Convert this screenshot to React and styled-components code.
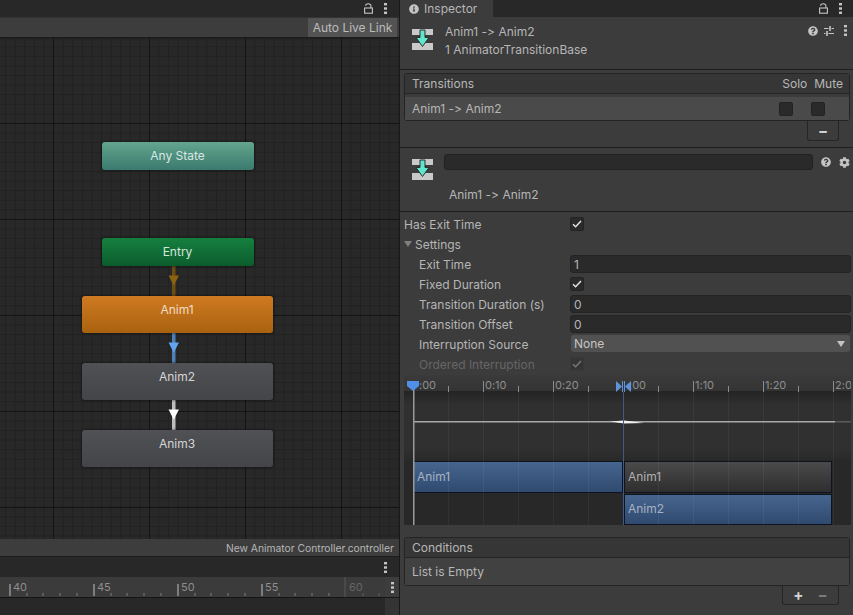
import React from "react";
import styled, { createGlobalStyle } from "styled-components";
import { FaCog, FaInfoCircle, FaQuestionCircle } from "react-icons/fa";

const GlobalStyle = createGlobalStyle`
  html, body {
    margin: 0;
    background: #191919;
  }
  body {
    font-family: Inter, "Noto Sans", "Liberation Sans", sans-serif;
    font-size: 12px;
    font-variant-ligatures: none;
    font-feature-settings: "calt" 0, "liga" 0;
    color: #b6b6b6;
  }
`;

const Page = styled.div`
  display: flex;
  width: 853px;
  height: 615px;
  overflow: hidden;
  background: #191919;
`;

/* ---------- icons ---------- */

const LockIcon = () => (
  <svg width="9" height="11" viewBox="0 0 9 11">
    <path d="M1.500 2.800C1.600 1.400 2.600 .7 4.200 .7S6.900 1.500 6.900 2.900V5" fill="none" stroke="#c4c4c4" strokeWidth="1.100" />
    <rect x=".6" y="5" width="7.800" height="5.200" fill="none" stroke="#c4c4c4" strokeWidth="1.100" />
  </svg>
);

const DotsIcon = () => (
  <svg width="3" height="11" viewBox="0 0 3 11">
    <rect y="0" width="3" height="2.400" fill="#c4c4c4" />
    <rect y="4.300" width="3" height="2.400" fill="#c4c4c4" />
    <rect y="8.600" width="3" height="2.400" fill="#c4c4c4" />
  </svg>
);

const SlidersIcon = () => (
  <svg width="10" height="10" viewBox="0 0 10 10">
    <path d="M0 2.500h4.500M7.500 2.500H10M0 7.500h1.500M4.500 7.500H10" stroke="#c4c4c4" strokeWidth="1.200" />
    <path d="M6 0v5M3 5v5" stroke="#c4c4c4" strokeWidth="1.600" />
  </svg>
);

const TransitionIcon = () => (
  <svg width="21" height="21" viewBox="0 0 21 21">
    <rect x="0" y="0" width="21" height="6" fill="#c9c9c9" />
    <rect x="0" y="14" width="21" height="7" fill="#c9c9c9" />
    <path d="M8 1h5v7.500h4l-6.500 9-6.500-9h4z" fill="#5fe6cd" stroke="#2f2f2f" strokeWidth="1" />
  </svg>
);

const CheckMark = () => (
  <svg width="10" height="8" viewBox="0 0 10 8">
    <path d="M1 4.200l2.600 2.500L9 1" fill="none" stroke="currentColor" strokeWidth="1.500" />
  </svg>
);

const TriangleDown = ({ size = 8, color = "#7f7f7f" }) => (
  <svg width={size} height={size - 2} viewBox="0 0 8 6">
    <path d="M0 0h8L4 6z" fill={color} />
  </svg>
);

/* ---------- shared bars ---------- */

const TabBar = styled.div`
  display: flex;
  align-items: center;
  justify-content: flex-end;
  flex: none;
  height: 17px;
  background: #282828;
`;

const TabIcons = styled.div`
  display: flex;
  align-items: center;
  gap: 11px;
  padding-right: ${(p) => p.$right}px;
`;

/* ---------- left pane ---------- */

const LeftPane = styled.div`
  display: flex;
  flex-direction: column;
  flex: none;
  width: 399px;
`;

const Toolbar = styled.div`
  display: flex;
  justify-content: flex-end;
  flex: none;
  height: 20px;
  padding-right: 2px;
  background: #3d3d3d;
  border-top: 1px solid #333;
  box-sizing: border-box;
`;

const LiveLink = styled.div`
  display: flex;
  align-items: center;
  justify-content: center;
  width: 89px;
  background: #535353;
  color: #bcbcbc;
  font-size: 12px;
`;

const Graph = styled.div`
  position: relative;
  flex: 1;
  background-color: #282828;
  background-image:
    linear-gradient(#141414 1px, transparent 1px),
    linear-gradient(90deg, #141414 1px, transparent 1px),
    linear-gradient(#212121 1px, transparent 1px),
    linear-gradient(90deg, #212121 1px, transparent 1px);
  background-size: 96px 96px, 96px 96px, 9.6px 9.6px, 9.6px 9.6px;
  background-position: 53px 86px, 53px 86px, 53px 86px, 53px 86px;

  &::before {
    content: "";
    position: absolute;
    inset: 0 0 auto 0;
    height: 3px;
    background: linear-gradient(#191919, transparent);
  }
`;

const NODE_COLORS = {
  any: ["#63a58d", "#3a7a6f", "#d8e6e1"],
  entry: ["#15803f", "#0c5c2c", "#d5e6da"],
  active: ["#cf7a22", "#a9620f", "#f2ddc4"],
  plain: ["#4f5154", "#434548", "#d6d6d6"],
};

const Node = styled.div`
  position: absolute;
  left: ${(p) => p.$x}px;
  top: ${(p) => p.$y}px;
  width: ${(p) => p.$w}px;
  height: ${(p) => p.$h}px;
  box-sizing: border-box;
  padding: ${(p) => p.$pad}px 1px 0 0;
  border-radius: 3px;
  text-align: center;
  line-height: 15px;
  color: ${(p) => NODE_COLORS[p.$kind][2]};
  background: linear-gradient(${(p) => NODE_COLORS[p.$kind][0]}, ${(p) => NODE_COLORS[p.$kind][1]});
  box-shadow: 0 0 3px rgba(0, 0, 0, 0.7);
`;

const Arrow = styled.svg`
  position: absolute;
  left: 167px;
  top: ${(p) => p.$y}px;
`;

const Connector = ({ y, color, line }) => (
  <Arrow $y={y} width="13" height="30" viewBox="0 0 13 30">
    <rect x="5" y="0" width="3.500" height="30" fill={line} />
    <path d="M1.500 9.500h10.500L6.750 19.500z" fill={color} />
  </Arrow>
);

const StatusBar = styled.div`
  display: flex;
  align-items: center;
  justify-content: flex-end;
  flex: none;
  height: 18px;
  padding-right: 5px;
  background: #3d3d3d;
  border-bottom: 1px solid #1c1c1c;
  box-sizing: border-box;
  font-size: 10.300px;
`;

const DarkBar = styled.div`
  display: flex;
  align-items: center;
  justify-content: flex-end;
  flex: none;
  height: 20px;
  padding-right: 12px;
  background: #282828;
`;

const RulerRow = styled.div`
  display: flex;
  flex: none;
  height: 20px;
  border-bottom: 1px solid #161616;
`;

const RulerTrack = styled.svg`
  display: block;
  flex: 1;
  background: #3b3b3b;
`;

const RulerEnd = styled.div`
  display: flex;
  align-items: center;
  justify-content: center;
  flex: none;
  width: 14px;
  background: #3d3d3d;
`;

const BottomRow = styled.div`
  display: flex;
  justify-content: flex-end;
  flex: none;
  height: 17px;
  background: #282828;
`;

const ScrollStub = styled.div`
  width: 14px;
  background: #343434;
`;

const BottomRuler = () => {
  const labels = [40, 45, 50, 55, 60];
  return (
    <RulerTrack height="20">
      {labels.map((n, i) => {
        const x = 9.5 + i * 84;
        const dim = n === 60;
        return (
          <g key={n}>
            {!dim && <rect x={x} y="7" width="1" height="12" fill="#c0c0c0" />}
            {dim && <rect x={x - 1} y="0" width="1" height="20" fill="#5a5a5a" />}
            <text x={x + 3.5} y="14" fontSize="11" fill={dim ? "#666" : "#8e8e8e"}>
              {n}
            </text>
            {[17, 33, 50, 67].map((d) => (
              <rect key={d} x={x + d} y="16" width="1" height="3" fill={dim ? "#606060" : "#7f7f7f"} />
            ))}
          </g>
        );
      })}
    </RulerTrack>
  );
};

/* ---------- right pane ---------- */

const RightPane = styled.div`
  display: flex;
  flex-direction: column;
  flex: 1;
  min-width: 0;
  margin-left: 1px;
  background: #3c3c3c;
`;

const InspectorTabs = styled.div`
  display: flex;
  flex: none;
  height: 17px;
  background: #282828;
`;

const ActiveTab = styled.div`
  display: flex;
  align-items: center;
  gap: 5px;
  width: 93px;
  padding-left: 9px;
  box-sizing: border-box;
  background: #3c3c3c;
`;

const TabFill = styled.div`
  display: flex;
  align-items: center;
  justify-content: flex-end;
  flex: 1;
`;

const AssetHeader = styled.div`
  display: flex;
  flex: none;
  height: 53px;
  box-sizing: border-box;
  padding: 12px 0 0 12px;
  border-bottom: 1px solid #1e1e1e;
`;

const AssetTitles = styled.div`
  flex: 1;
  margin: -6px 0 0 12px;
  line-height: 18px;
`;

const HeaderTools = styled.div`
  display: flex;
  align-items: center;
  gap: 6px;
  height: 11px;
  margin: -4px 6px 0 0;
`;

const ToolEnd = styled.span`
  display: inline-flex;
  margin-left: 4px;
`;

const ListSection = styled.div`
  flex: none;
  height: 78px;
  box-sizing: border-box;
  padding: 3px 3px 0 4px;
  border-bottom: 1px solid #1e1e1e;
`;

const ListBox = styled.div`
  border: 1px solid #242424;
  border-radius: 3px;
  background: #3c3c3c;
`;

const ListHead = styled.div`
  display: flex;
  align-items: center;
  height: 19px;
  padding: 0 6px 0 7px;
  background: #363636;
  border-bottom: 1px solid #252525;
`;

const ListTitle = styled.div`
  flex: 1;
`;

const MuteLabels = styled.div`
  display: flex;
  gap: 7px;
`;

const TransitionRow = styled.div`
  display: flex;
  align-items: center;
  height: 23px;
  margin-top: 3px;
  padding: 0 24px 0 7px;
  background: #4a4a4a;
`;

const RowBoxes = styled.div`
  display: flex;
  gap: 18px;
`;

const SmallBox = styled.div`
  width: 14px;
  height: 14px;
  border-radius: 2px;
  background: #2a2a2a;
  border: 1px solid #232323;
  box-sizing: border-box;
`;

const ListFooter = styled.div`
  display: flex;
  justify-content: flex-end;
  padding-right: 11px;
`;

const FooterTab = styled.div`
  display: flex;
  align-items: center;
  justify-content: center;
  gap: ${(p) => p.$gap || 0}px;
  width: ${(p) => p.$w}px;
  height: ${(p) => p.$h}px;
  box-sizing: border-box;
  padding-bottom: ${(p) => p.$pb || 0}px;
  border: 1px solid #252525;
  border-top: 0;
  border-radius: 0 0 3px 3px;
  background: #3c3c3c;
  font-size: 15px;
  font-weight: 700;
`;

const FooterGlyph = styled.span`
  line-height: 1;
  color: ${(p) => (p.$off ? "#7c7c7c" : "#d6d6d6")};
`;

const NameSection = styled.div`
  display: grid;
  grid-template-columns: 32px minmax(0, 1fr);
  flex: none;
  height: 64px;
  box-sizing: border-box;
  padding: 6px 0 0 12px;
  border-bottom: 1px solid #1e1e1e;
`;

const NameIconCell = styled.div`
  padding-top: 5px;
`;

const NameRow = styled.div`
  display: flex;
  align-items: center;
  gap: 8px;
`;

const NameInput = styled.div`
  width: 369px;
  height: 16px;
  flex: none;
  background: #2a2a2a;
  border: 1px solid #222;
  border-radius: 3px;
  box-sizing: border-box;
`;

const NameCaption = styled.div`
  margin: 17px 0 0 5px;
  line-height: 15px;
`;

const PropList = styled.div`
  flex: none;
  padding-top: 2px;
`;

const PropRow = styled.div`
  display: grid;
  grid-template-columns: 166px minmax(0, 1fr);
  align-items: center;
  height: 20px;
  padding: 0 2px 0 4px;
`;

const PropLabel = styled.div`
  display: flex;
  align-items: center;
  gap: 3px;
  padding-left: ${(p) => (p.$indent ? 15 : 0)}px;
  color: ${(p) => (p.$off ? "#666" : "#b6b6b6")};
  white-space: nowrap;
`;

const FoldMark = styled.span`
  display: inline-flex;
`;

const Field = styled.div`
  height: 18px;
  padding-left: 3px;
  box-sizing: border-box;
  line-height: 17px;
  background: #2a2a2a;
  border: 1px solid #232323;
  border-radius: 3px;
`;

const Select = styled.div`
  display: flex;
  align-items: center;
  justify-content: space-between;
  height: 17px;
  margin: -1px 1px 0 1px;
  padding: 0 5px 0 3px;
  border-radius: 3px;
  background: #515151;
  color: #c4c4c4;
`;

const CheckBox = styled.div`
  display: flex;
  align-items: center;
  justify-content: center;
  width: 14px;
  height: 14px;
  box-sizing: border-box;
  border-radius: 2px;
  border: 1px solid ${(p) => (p.$off ? "#3a3a3a" : "#232323")};
  background: ${(p) => (p.$off ? "#353535" : "#2a2a2a")};
  color: ${(p) => (p.$off ? "#777" : "#e2e2e2")};
`;

/* ---------- timeline ---------- */

const Timeline = styled.div`
  position: relative;
  flex: none;
  height: 150px;
  margin: 1px 2px 0 4px;
  background: #2f2f2f;
`;

const TimeRuler = styled.div`
  height: 16px;
  background: linear-gradient(#3a3a3a, #343434);
`;

const CurveArea = styled.div`
  height: 69px;
  background: linear-gradient(#232323, #303030 14px, #303030 58px, #292929);
`;

const Tracks = styled.div`
  display: grid;
  grid-template-columns: 9px 210px 209px 1fr;
  grid-template-rows: 33px 32px;
  height: 65px;
  background: #282828;
`;

const Clip = styled.div`
  grid-column: ${(p) => p.$col};
  grid-row: ${(p) => p.$row};
  display: flex;
  align-items: center;
  padding: 0 0 2px 3px;
  box-sizing: border-box;
  margin-top: 1px;
  border: 1px solid #0d1420;
  border-left-width: ${(p) => (p.$col === 3 ? 2 : 1)}px;
  color: ${(p) => (p.$blue ? "#a6b2c4" : "#b0b0b0")};
  background: ${(p) =>
    p.$blue ? "linear-gradient(#46658f, #304a6f)" : "linear-gradient(#4a4a4a, #2e2e2e)"};
`;

const TimelineOverlay = styled.svg`
  position: absolute;
  inset: 0;
  pointer-events: none;
`;

const TimeOverlay = () => {
  const labelled = [
    [9, ":00"],
    [79, "0:10"],
    [149, "0:20"],
    [219, ":00"],
    [289, "1:10"],
    [359, "1:20"],
    [429, "2:0"],
  ];
  const half = [44, 114, 184, 254, 324, 394];
  return (
    <TimelineOverlay width="447" height="150" viewBox="0 0 447 150">
      {labelled.map(([x]) => (
        <rect key={x} x={x} y="17" width="1" height="133" fill="#fff" opacity="0.05" />
      ))}
      {half.map((x) => (
        <rect key={x} x={x} y="17" width="1" height="133" fill="#fff" opacity="0.05" />
      ))}
      {labelled.map(([x, t]) => (
        <g key={t + x}>
          {x > 9 && x !== 219 && <rect x={x} y="6" width="1" height="11" fill="#8c8c8c" />}
          <text x={x === 9 || x === 219 ? x + 6 : x + 2} y="14" fontSize="11" fill="#8e8e8e">
            {t}
          </text>
        </g>
      ))}
      {half.map((x) => (
        <rect key={x} x={x} y="11" width="1" height="6" fill="#8c8c8c" />
      ))}
      <rect x="9" y="46" width="422" height="1.500" fill="#a8a8a8" />
      <rect x="431" y="46" width="16" height="1.500" fill="#5a5a5a" />
      <path d="M206 46.500l14 -1 20 2.500-20 .5z" fill="#f2f2f2" />
      <rect x="219" y="17" width="1" height="133" fill="#3f5b85" />
      <rect x="9" y="13" width="1.500" height="137" fill="#9a9a9a" />
      <path d="M3 6h12v5l-6 5-6-5z" fill="#4f8fe6" />
      <path d="M212 6v11l6-5.500zM218 6h1v11h-1z" fill="#5b93dc" />
      <path d="M220 6h1v11h-1zM227 6v11l-6-5.500z" fill="#5b93dc" />
    </TimelineOverlay>
  );
};

const ConditionsSection = styled.div`
  flex: none;
  padding: 12px 3px 0 4px;
`;

const EmptyRow = styled.div`
  display: flex;
  align-items: center;
  height: 27px;
  padding-left: 7px;
  background: #414141;
`;

const App = () => (
  <Page>
    <GlobalStyle />
    <LeftPane>
      <TabBar>
        <TabIcons $right={12}>
          <LockIcon />
          <DotsIcon />
        </TabIcons>
      </TabBar>
      <Toolbar>
        <LiveLink>Auto Live Link</LiveLink>
      </Toolbar>
      <Graph>
        <Connector y={229} line="#6e4f12" color="#8a6210" />
        <Connector y={296} line="#4d7fb8" color="#62a4f0" />
        <Connector y={363} line="#bdbdbd" color="#ffffff" />
        <Node $kind="any" $x={102} $y={105} $w={152} $h={28} $pad={6}>Any State</Node>
        <Node $kind="entry" $x={102} $y={201} $w={152} $h={28} $pad={6}>Entry</Node>
        <Node $kind="active" $x={82} $y={259} $w={191} $h={37} $pad={6}>Anim1</Node>
        <Node $kind="plain" $x={82} $y={326} $w={191} $h={37} $pad={6}>Anim2</Node>
        <Node $kind="plain" $x={82} $y={393} $w={191} $h={37} $pad={6}>Anim3</Node>
      </Graph>
      <StatusBar>New Animator Controller.controller</StatusBar>
      <DarkBar>
        <DotsIcon />
      </DarkBar>
      <RulerRow>
        <BottomRuler />
        <RulerEnd>
          <DotsIcon />
        </RulerEnd>
      </RulerRow>
      <BottomRow>
        <ScrollStub />
      </BottomRow>
    </LeftPane>

    <RightPane>
      <InspectorTabs>
        <ActiveTab>
          <FaInfoCircle size={10} color="#c4c4c4" />
          Inspector
        </ActiveTab>
        <TabFill>
          <TabIcons $right={11}>
            <LockIcon />
            <DotsIcon />
          </TabIcons>
        </TabFill>
      </InspectorTabs>

      <AssetHeader>
        <TransitionIcon />
        <AssetTitles>
          <div>Anim1 -&gt; Anim2</div>
          <div>1 AnimatorTransitionBase</div>
        </AssetTitles>
        <HeaderTools>
          <FaQuestionCircle size={10} color="#c4c4c4" />
          <SlidersIcon />
          <ToolEnd>
            <DotsIcon />
          </ToolEnd>
        </HeaderTools>
      </AssetHeader>

      <ListSection>
        <ListBox>
          <ListHead>
            <ListTitle>Transitions</ListTitle>
            <MuteLabels>
              <span>Solo</span>
              <span>Mute</span>
            </MuteLabels>
          </ListHead>
          <TransitionRow>
            <ListTitle>Anim1 -&gt; Anim2</ListTitle>
            <RowBoxes>
              <SmallBox />
              <SmallBox />
            </RowBoxes>
          </TransitionRow>
        </ListBox>
        <ListFooter>
          <FooterTab $w={32} $h={20}>
            <FooterGlyph>−</FooterGlyph>
          </FooterTab>
        </ListFooter>
      </ListSection>

      <NameSection>
        <NameIconCell>
          <TransitionIcon />
        </NameIconCell>
        <div>
          <NameRow>
            <NameInput />
            <FaQuestionCircle size={10} color="#c4c4c4" />
            <FaCog size={11} color="#c4c4c4" />
          </NameRow>
          <NameCaption>Anim1 -&gt; Anim2</NameCaption>
        </div>
      </NameSection>

      <PropList>
        <PropRow>
          <PropLabel>Has Exit Time</PropLabel>
          <CheckBox><CheckMark /></CheckBox>
        </PropRow>
        <PropRow>
          <PropLabel>
            <FoldMark><TriangleDown /></FoldMark>
            Settings
          </PropLabel>
        </PropRow>
        <PropRow>
          <PropLabel $indent>Exit Time</PropLabel>
          <Field>1</Field>
        </PropRow>
        <PropRow>
          <PropLabel $indent>Fixed Duration</PropLabel>
          <CheckBox><CheckMark /></CheckBox>
        </PropRow>
        <PropRow>
          <PropLabel $indent>Transition Duration (s)</PropLabel>
          <Field>0</Field>
        </PropRow>
        <PropRow>
          <PropLabel $indent>Transition Offset</PropLabel>
          <Field>0</Field>
        </PropRow>
        <PropRow>
          <PropLabel $indent>Interruption Source</PropLabel>
          <Select>
            None
            <TriangleDown color="#c4c4c4" />
          </Select>
        </PropRow>
        <PropRow>
          <PropLabel $indent $off>Ordered Interruption</PropLabel>
          <CheckBox $off><CheckMark /></CheckBox>
        </PropRow>
      </PropList>

      <Timeline>
        <TimeRuler />
        <CurveArea />
        <Tracks>
          <Clip $col={2} $row={1} $blue>Anim1</Clip>
          <Clip $col={3} $row={1}>Anim1</Clip>
          <Clip $col={3} $row={2} $blue>Anim2</Clip>
        </Tracks>
        <TimeOverlay />
      </Timeline>

      <ConditionsSection>
        <ListBox>
          <ListHead>
            <ListTitle>Conditions</ListTitle>
          </ListHead>
          <EmptyRow>List is Empty</EmptyRow>
        </ListBox>
        <ListFooter>
          <FooterTab $w={57} $h={19} $gap={14} $pb={2}>
            <FooterGlyph>+</FooterGlyph>
            <FooterGlyph $off>−</FooterGlyph>
          </FooterTab>
        </ListFooter>
      </ConditionsSection>
    </RightPane>
  </Page>
);

export default App;
